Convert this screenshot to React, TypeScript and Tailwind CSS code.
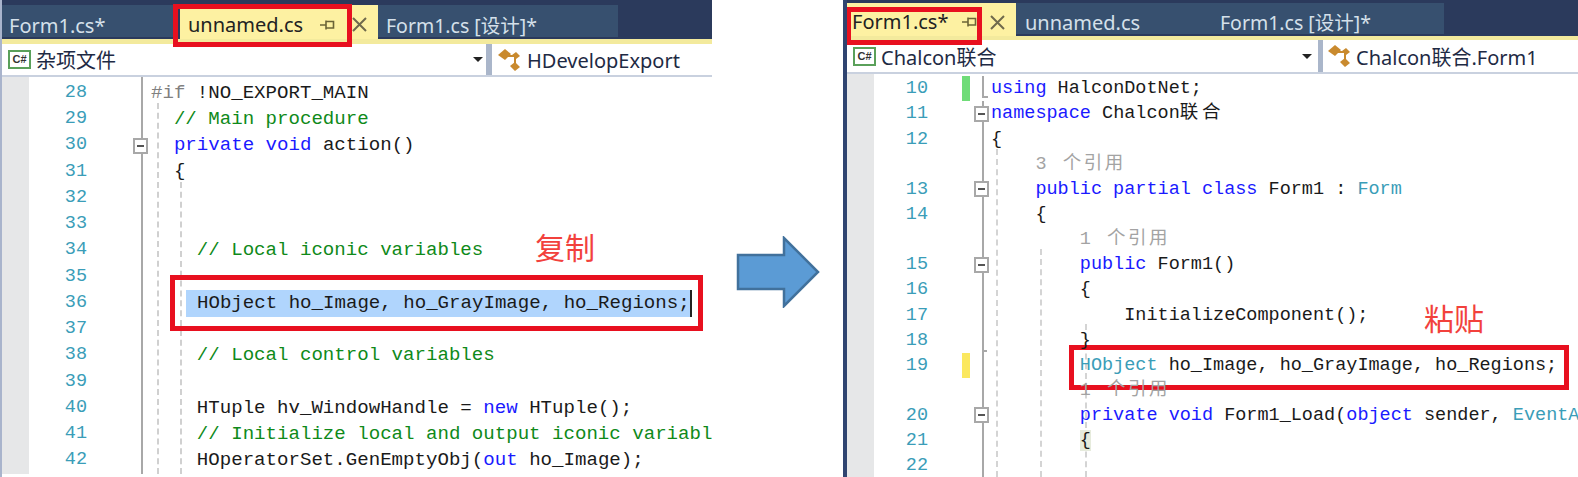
const BLUE = "text-[#1a1aff]";
const GREEN = "text-[#0f8a1a]";
const TEAL = "text-[#3a9db8]";
const GRAY = "text-[#808080]";
const GHOST = "tracking-[2.5px] text-[#a3a3a3]";

type Part = [string, string?];

const leftLines: { n: number; parts: Part[]; fold?: boolean; selected?: boolean }[] = [
  { n: 28, parts: [["#if", GRAY], [" !NO_EXPORT_MAIN"]] },
  { n: 29, parts: [["  // Main procedure", GREEN]] },
  { n: 30, parts: [["  private void", BLUE], [" action()"]], fold: true },
  { n: 31, parts: [["  {"]] },
  { n: 32, parts: [] },
  { n: 33, parts: [] },
  { n: 34, parts: [["    // Local iconic variables", GREEN]] },
  { n: 35, parts: [] },
  { n: 36, parts: [["HObject ho_Image, ho_GrayImage, ho_Regions;"]], selected: true },
  { n: 37, parts: [] },
  { n: 38, parts: [["    // Local control variables", GREEN]] },
  { n: 39, parts: [] },
  { n: 40, parts: [["    HTuple hv_WindowHandle = "], ["new", BLUE], [" HTuple();"]] },
  { n: 41, parts: [["    // Initialize local and output iconic variables", GREEN]] },
  { n: 42, parts: [["    HOperatorSet.GenEmptyObj("], ["out", BLUE], [" ho_Image);"]] },
];

const rightLines: { n?: number; parts: Part[]; fold?: boolean; marker?: string; end?: boolean; tick?: boolean }[] = [
  { n: 10, parts: [["using", BLUE], [" HalconDotNet;"]], marker: "bg-[#6fdc78]", end: true },
  { n: 11, parts: [["namespace", BLUE], [" Chalcon"], ["联合", "tracking-[3.7px]"]], fold: true },
  { n: 12, parts: [["{"]] },
  { parts: [["    "], ["3 个引用", GHOST]] },
  { n: 13, parts: [["    public partial class", BLUE], [" Form1 : "], ["Form", TEAL]], fold: true },
  { n: 14, parts: [["    {"]] },
  { parts: [["        "], ["1 个引用", GHOST]] },
  { n: 15, parts: [["        public", BLUE], [" Form1()"]], fold: true },
  { n: 16, parts: [["        {"]] },
  { n: 17, parts: [["            InitializeComponent();"]] },
  { n: 18, parts: [["        }"]] },
  { n: 19, parts: [["        "], ["HObject", TEAL], [" ho_Image, ho_GrayImage, ho_Regions;"]], marker: "bg-[#fbe85f]", tick: true },
  { parts: [["        "], ["1 个引用", GHOST]] },
  { n: 20, parts: [["        private void", BLUE], [" Form1_Load("], ["object", BLUE], [" sender, "], ["EventArgs", TEAL]], fold: true },
  { n: 21, parts: [["        "], ["{", "bg-[#e6ebdc]"]] },
  { n: 22, parts: [] },
];

function PinIcon() {
  return (
    <svg width="15" height="14" viewBox="0 0 15 14" fill="none" stroke="#6b6437" strokeWidth="1.6" className="shrink-0">
      <path d="M0 7h6M6 2.5v9M6 3.5h7.5v6.5H6" />
    </svg>
  );
}

function CloseIcon() {
  return (
    <svg width="15" height="15" viewBox="0 0 15 15" fill="none" stroke="#6f6a4c" strokeWidth="2" className="shrink-0">
      <path d="M1 1l13 13M14 1L1 14" />
    </svg>
  );
}

function CsIcon() {
  return (
    <div className="flex h-[19px] w-[23px] shrink-0 items-center justify-center border-2 border-[#5aa05a] bg-white font-['Liberation_Sans',sans-serif] text-[11px] font-bold leading-none text-[#333]">
      C#
    </div>
  );
}

function ClassIcon() {
  return (
    <svg width="24" height="24" viewBox="0 0 24 24" className="shrink-0">
      <path d="M0 7L7 1l6 5-6 6z" fill="#c98a2e" />
      <path d="M10 8h7v9" fill="none" stroke="#c98a2e" strokeWidth="2" />
      <path d="M14 7l4-3 4 4-4 3zM12 18l5-4 5 5-5 4z" fill="#c98a2e" />
    </svg>
  );
}

function FoldBox() {
  return (
    <div className="relative z-10 flex h-[16px] w-[15px] items-center justify-center border-2 border-[#a8a8a8] bg-white">
      <div className="h-[2px] w-[7px] bg-[#555]" />
    </div>
  );
}

function Parts({ parts }: { parts: Part[] }) {
  return (
    <>
      {parts.map((p, i) => (
        <span key={i} className={p[1]}>
          {p[0]}
        </span>
      ))}
    </>
  );
}

function LeftPanel() {
  return (
    <div className="relative h-[477px] w-[712px] shrink-0 overflow-hidden border-l-2 border-[#a9b4cc]">
      {/* tabs */}
      <div className="flex h-[39px] items-start bg-[#2b3a5c] pt-[5px] font-['Noto_Sans','Noto_Sans_CJK_SC',sans-serif] text-[20px] leading-[42px]">
        <div className="h-[32px] w-[176px] bg-[#37506f] pl-[7px] text-[#d5e0ea]">Form1.cs*</div>
        <div className="ml-[2px] flex h-[34px] w-[198px] items-center bg-[#fdf1a2] pl-[8px] pt-[5px] leading-none text-[#222]">
          <span className="w-[132px]">unnamed.cs</span>
          <PinIcon />
          <div className="w-[17px]" />
          <CloseIcon />
        </div>
        <div className="h-[32px] w-[240px] bg-[#37506f] pl-[8px] text-[19.5px] text-[#d5e0ea]">Form1.cs [设计]*</div>
      </div>
      <div className="h-[5px] bg-[#f3ea9d]" />
      {/* nav */}
      <div className="flex h-[33px] border-b-2 border-[#c9d1df] bg-white font-['Noto_Sans','Noto_Sans_CJK_SC',sans-serif] text-[20px] text-[#1e2a44]">
        <div className="flex w-[484px] items-center pl-[6px]">
          <CsIcon />
          <span className="ml-[5px] mt-[2px]">杂项文件</span>
          <div className="ml-auto mr-[3px] h-0 w-0 border-x-[5px] border-t-[5px] border-x-transparent border-t-[#222]" />
        </div>
        <div className="w-[6px] bg-[#aab6ca]" />
        <div className="flex items-center pl-[6px]">
          <ClassIcon />
          <span className="ml-[5px] mt-[2px]">HDevelopExport</span>
        </div>
      </div>
      {/* code */}
      <div className="relative font-['Liberation_Mono','Noto_Sans_CJK_SC',monospace] text-[19.1px] text-[#1a1a1a]">
        <div className="absolute bottom-0 left-[155px] top-[26px] border-l-2 border-dashed border-[#d0d0d0]" />
        <div className="absolute bottom-0 left-[178px] top-[105px] border-l-2 border-dashed border-[#d0d0d0]" />
        <div className="flex h-[3px]">
          <div className="w-[27px] bg-[#e6e7e8]" />
          <div className="ml-[112px] w-[2px] bg-[#a8a8a8]" />
        </div>
        {leftLines.map((l) => (
          <div key={l.n} className="flex h-[26.25px] items-center whitespace-pre leading-none">
            <div className="h-full w-[27px] shrink-0 bg-[#e6e7e8]" />
            <div className="w-[58px] shrink-0 text-right text-[18.5px] text-[#3a9db8]">{l.n}</div>
            <div className="w-[46px] shrink-0" />
            <div className="relative flex h-full w-[15px] shrink-0 items-center justify-center">
              <div className="absolute inset-y-0 left-[8px] w-[2px] bg-[#a8a8a8]" />
              {l.fold && <FoldBox />}
            </div>
            {l.selected ? (
              <div className="relative z-10 ml-[38px] flex h-[27px] w-[506px] items-center border-r-2 border-[#222] bg-[#b0d5fd] pl-[11px]">
                <Parts parts={l.parts} />
              </div>
            ) : (
              <div className="relative z-10 pl-[3px]">
                <Parts parts={l.parts} />
              </div>
            )}
          </div>
        ))}
      </div>
      {/* annotations */}
      <div className="absolute left-[171px] top-[4px] h-[43px] w-[179px] border-[5px] border-[#e8101f]" />
      <div className="absolute left-[168px] top-[275px] h-[56px] w-[533px] border-[5px] border-[#e8101f]" />
      <div className="absolute left-[533px] top-[224px] font-['Noto_Sans_CJK_SC',sans-serif] text-[30px] leading-[44px] text-[#f2413c]">
        复制
      </div>
    </div>
  );
}

function RightPanel() {
  return (
    <div className="relative h-[477px] min-w-0 flex-1 overflow-hidden border-l-[4px] border-[#2f4470]">
      {/* tabs */}
      <div className="flex h-[36px] items-start bg-[#2b3a5c] pt-[3px] font-['Noto_Sans','Noto_Sans_CJK_SC',sans-serif] text-[20px] leading-[40px]">
        <div className="flex h-[33px] w-[169px] items-center bg-[#fdf1a2] pl-[5px] pt-[5px] leading-none text-[#222]">
          <span className="w-[110px]">Form1.cs*</span>
          <PinIcon />
          <div className="w-[13px]" />
          <CloseIcon />
        </div>
        <div className="h-[31px] w-[184px] bg-[#37506f] pl-[9px] text-[#d5e0ea]">unnamed.cs</div>
        <div className="h-[31px] w-[244px] bg-[#37506f] pl-[20px] text-[19.5px] text-[#d5e0ea]">Form1.cs [设计]*</div>
      </div>
      <div className="h-[4px] bg-[#f3ea9d]" />
      {/* nav */}
      <div className="flex h-[34px] border-b-2 border-[#c9d1df] bg-white font-['Noto_Sans','Noto_Sans_CJK_SC',sans-serif] text-[20px] text-[#1e2a44]">
        <div className="flex w-[471px] items-center pl-[6px]">
          <CsIcon />
          <span className="ml-[5px] mt-[3px]">Chalcon联合</span>
          <div className="ml-auto mr-[6px] h-0 w-0 border-x-[5px] border-t-[5px] border-x-transparent border-t-[#222]" />
        </div>
        <div className="w-[5px] bg-[#aab6ca]" />
        <div className="flex items-center pl-[5px]">
          <ClassIcon />
          <span className="ml-[4px] mt-[3px]">Chalcon联合.Form1</span>
        </div>
      </div>
      {/* code */}
      <div className="relative h-[403px] bg-white font-['Liberation_Mono','Noto_Sans_CJK_SC',monospace] text-[18.5px] text-[#1a1a1a]">
        <div className="absolute bottom-0 left-[149px] top-[75px] border-l-2 border-dashed border-[#d4d4d4]" />
        <div className="absolute bottom-0 left-[193px] top-[175px] border-l-2 border-dashed border-[#d4d4d4]" />
        <div className="absolute bottom-0 left-[238px] top-[250px] border-l-2 border-dashed border-[#d4d4d4]" />
        <div className="flex h-[2px]">
          <div className="w-[27px] bg-[#e6e7e8]" />
        </div>
        {rightLines.map((l, i) => (
          <div key={i} className="flex h-[25.15px] items-center whitespace-pre leading-none">
            <div className="h-full w-[27px] shrink-0 bg-[#e6e7e8]" />
            <div className="w-[54px] shrink-0 pt-[2px] text-right text-[#3a9db8]">{l.n}</div>
            <div className="w-[34px] shrink-0" />
            <div className={`h-full w-[8px] shrink-0 ${l.marker ?? ""}`} />
            <div className="w-[4px] shrink-0" />
            <div className="relative flex h-full w-[15px] shrink-0 items-center justify-center">
              <div className={`absolute left-[8px] top-0 w-[2px] bg-[#a8a8a8] ${l.end ? "bottom-[3px]" : "bottom-0"}`} />
              {l.end && <div className="absolute bottom-[3px] left-[8px] h-[2px] w-[6px] bg-[#a8a8a8]" />}
              {l.tick && <div className="absolute left-[8px] top-[-3px] h-[2px] w-[5px] bg-[#a8a8a8]" />}
              {l.fold && <FoldBox />}
            </div>
            <div className="relative z-10 pl-[2px] pt-[2px]">
              <Parts parts={l.parts} />
            </div>
          </div>
        ))}
        {/* margin and fold line below the last row */}
        <div className="flex h-full">
          <div className="w-[27px] bg-[#e6e7e8]" />
          <div className="ml-[108px] w-[2px] bg-[#a8a8a8]" />
        </div>
      </div>
      {/* annotations */}
      <div className="absolute left-[-1px] top-[7px] h-[38px] w-[136px] border-[5px] border-[#e8101f]" />
      <div className="absolute left-[222px] top-[345px] h-[45px] w-[500px] border-[5px] border-[#e8101f]" />
      <div className="absolute left-[577px] top-[295px] font-['Noto_Sans_CJK_SC',sans-serif] text-[30px] leading-[44px] text-[#f2413c]">
        粘贴
      </div>
    </div>
  );
}

export default function App() {
  return (
    <div className="flex h-[477px] w-[1578px] overflow-hidden bg-white">
      <LeftPanel />
      <div className="flex w-[131px] shrink-0 justify-center pt-[236px]">
        <svg width="84" height="72" viewBox="0 0 84 72">
          <path d="M2 19h46V2l34 34-34 34V53H2z" fill="#5b9bd5" stroke="#41719c" strokeWidth="2.5" />
        </svg>
      </div>
      <RightPanel />
    </div>
  );
}
